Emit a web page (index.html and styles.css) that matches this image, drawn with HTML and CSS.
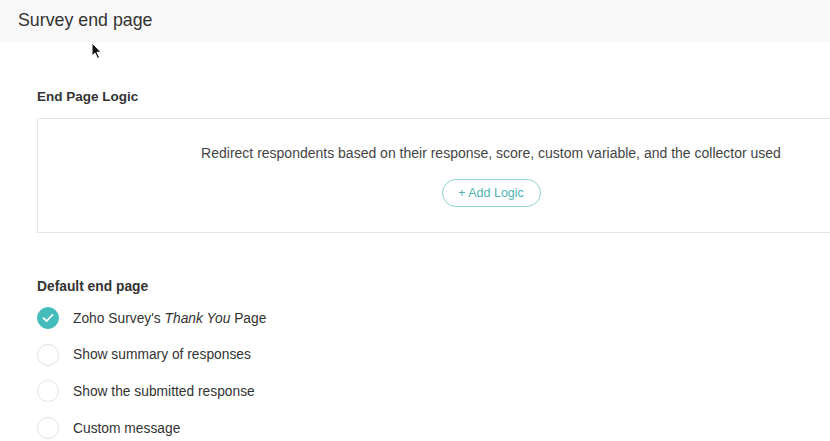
FILE: index.html
```html
<!DOCTYPE html>
<html lang="en">
<head>
    <meta charset="UTF-8">
    <title>Survey end page</title>
    <link rel="stylesheet" href="styles.css">
</head>
<body>
    <div class="cabecera">
        <h1>Survey end page</h1>
    </div>

    <!-- puntero del raton -->
    <svg class="puntero" width="12" height="18" viewBox="0 0 12 18">
        <path d="M1 1 L1 14 L4 11 L6.5 16.5 L8.5 15.5 L6 10.2 L10 10.2 Z" fill="#111" stroke="#fff" stroke-width="1"/>
    </svg>

    <div class="contenido">
        <h3 class="titulo">End Page Logic</h3>
        <div class="caja-logica">
            <p>Redirect respondents based on their response, score, custom variable, and the collector used</p>
            <button type="button" class="btn-logica">+ Add Logic</button>
        </div>

        <h3 class="titulo titulo-default">Default end page</h3>
        <ul class="opciones">
            <li class="opcion">
                <span class="radio marcado">
                    <svg width="12" height="10" viewBox="0 0 12 10"><path d="M1.5 5.2 L4.6 8 L10.5 1.8" fill="none" stroke="#fff" stroke-width="1.8" stroke-linecap="round" stroke-linejoin="round"/></svg>
                </span>
                Zoho Survey's&nbsp;<em>Thank You</em>&nbsp;Page
            </li>
            <li class="opcion"><span class="radio"></span>Show summary of responses</li>
            <li class="opcion"><span class="radio"></span>Show the submitted response</li>
            <li class="opcion"><span class="radio"></span>Custom message</li>
        </ul>
    </div>
</body>
</html>
```

FILE: styles.css
```css
body {
    margin: 0;
    font-family: "Liberation Sans", Arial, sans-serif;
    color: #333;
    background-color: white;
    overflow: hidden;
    width: 830px;
    height: 441px;
    position: relative;
}

.cabecera {
    background-color: #f8f8f8;
    height: 42px;
    padding-left: 18px;
    display: flex;
    align-items: center;
}

.cabecera h1 {
    margin: 0 0 1px 0;
    font-size: 17.8px;
    font-weight: normal;
    color: #333;
}

.puntero {
    position: absolute;
    left: 91px;
    top: 42px;
}

.contenido {
    padding-left: 37px;
    overflow: hidden;
}

.titulo {
    margin: 47px 0 0 0;
    font-size: 13.5px;
    font-weight: bold;
    color: #333;
    line-height: 16px;
}

.caja-logica {
    margin-top: 13px;
    width: 906px;
    height: 113px;
    border: 1px solid #e6e6e6;
    border-right: none;
    display: flex;
    flex-direction: column;
    align-items: center;
}

.caja-logica p {
    margin: 26px 0 0 0;
    font-size: 14px;
    color: #444;
}

.btn-logica {
    margin-top: 18px;
    width: 99px;
    height: 28px;
    border: 1px solid #8fd3cf;
    border-radius: 14px;
    background: white;
    color: #4db3ad;
    font-family: inherit;
    font-size: 12.5px;
    padding: 0;
}

.titulo-default {
    margin-top: 46px;
    font-size: 13.8px;
}

.opciones {
    list-style: none;
    margin: 12px 0 0 0;
    padding: 0;
}

.opcion {
    display: flex;
    align-items: center;
    height: 22px;
    margin-bottom: 14.7px;
    font-size: 13.8px;
    color: #333;
}

.radio {
    width: 20px;
    height: 20px;
    border: 1px solid #e2e2e2;
    border-radius: 50%;
    margin-right: 14px;
    display: flex;
    align-items: center;
    justify-content: center;
}

.radio.marcado {
    background-color: #45bcbc;
    border-color: #45bcbc;
}
```
